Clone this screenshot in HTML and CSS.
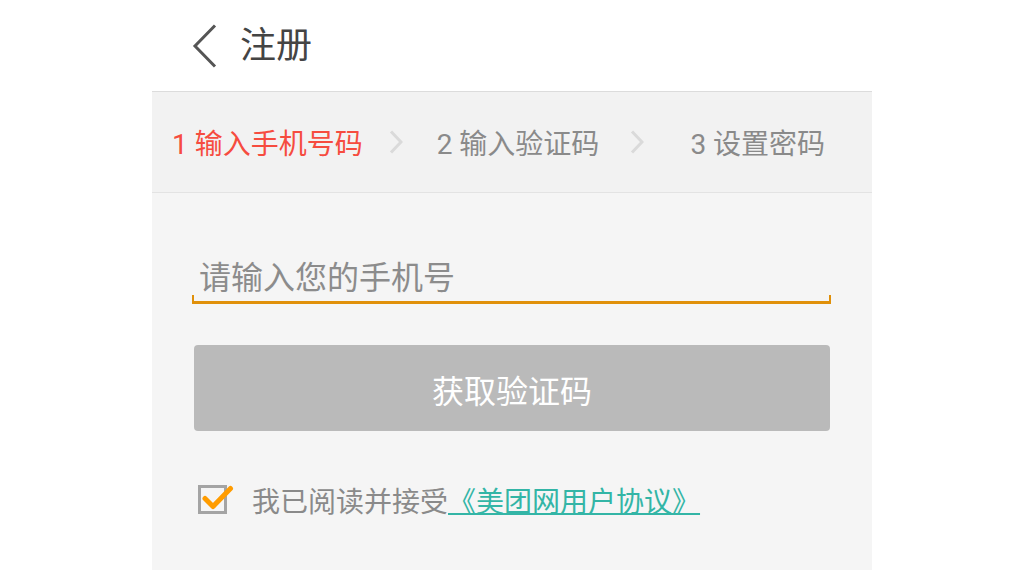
FILE: index.html
```html
<!DOCTYPE html>
<html lang="zh-CN">
<head>
<meta charset="utf-8">
<title>注册</title>
<link rel="stylesheet" href="styles.css">
</head>
<body>
<div class="page">
  <header class="header">
    <svg class="back" width="26" height="44" viewBox="0 0 26 44" aria-hidden="true">
      <path d="M23 1.5 L3 22 L23 42.5" fill="none" stroke="#555" stroke-width="3"/>
    </svg>
    <h1 class="title">注册</h1>
  </header>
  <nav class="steps">
    <span class="step step-active">1 输入手机号码</span>
    <svg class="step-arrow arrow-1" width="14" height="24" viewBox="0 0 14 24" aria-hidden="true">
      <path d="M2 1.5 L12 12 L2 22.5" fill="none" stroke="#dadada" stroke-width="3"/>
    </svg>
    <span class="step">2 输入验证码</span>
    <svg class="step-arrow arrow-2" width="14" height="24" viewBox="0 0 14 24" aria-hidden="true">
      <path d="M2 1.5 L12 12 L2 22.5" fill="none" stroke="#dadada" stroke-width="3"/>
    </svg>
    <span class="step">3 设置密码</span>
  </nav>
  <main class="content">
    <div class="field">
      <span class="placeholder">请输入您的手机号</span>
    </div>
    <div class="btn">获取验证码</div>
    <div class="agree">
      <svg class="check" width="36" height="30" viewBox="0 0 36 30" aria-hidden="true">
        <rect x="1.5" y="1.5" width="26" height="26" fill="none" stroke="#a4a4a4" stroke-width="3"/>
        <path d="M7 13.5 L15 21.5 L32.5 3.5" fill="none" stroke="#ff9c00" stroke-width="5" stroke-linecap="round" stroke-linejoin="round"/>
      </svg>
      <span class="agree-text">我已阅读并接受<a class="agree-link" href="#">《美团网用户协议》</a></span>
    </div>
  </main>
</div>
</body>
</html>
```
FILE: styles.css
```css
html, body {
  margin: 0;
  padding: 0;
  background: #ffffff;
}

body {
  font-family: Roboto, "Noto Sans CJK SC", "Noto Sans", sans-serif;
}

.page {
  width: 720px;
  margin-left: 152px;
  min-height: 570px;
  display: flex;
  flex-direction: column;
}

.header {
  height: 91px;
  display: flex;
  align-items: center;
  padding-left: 40px;
  background: #ffffff;
}

.back {
  display: block;
  flex: none;
}

.title {
  margin: 0 0 0 22px;
  font-size: 36px;
  font-weight: normal;
  color: #444444;
  line-height: 40px;
}

.steps {
  height: 100px;
  display: flex;
  align-items: center;
  padding-left: 20px;
  background: #f2f2f2;
  border-top: 1px solid #dcdcdc;
  border-bottom: 1px solid #e3e3e3;
}

.step {
  font-size: 28px;
  color: #8a8a8a;
  line-height: 36px;
  padding-top: 6px;
  white-space: nowrap;
}

.step-active {
  color: #f64c3f;
}

.step-arrow {
  display: block;
  flex: none;
}

.arrow-1 {
  margin: 0 34px 0 26px;
}

.arrow-2 {
  margin: 0 46px 0 31px;
}

.content {
  flex: 1;
  background: #f5f5f5;
  padding-top: 65px;
}

.field {
  position: relative;
  margin: 0 41px 0 40px;
  padding: 0 0 3px 7px;
  border-bottom: 3px solid #e0900a;
}

.field::before,
.field::after {
  content: "";
  position: absolute;
  bottom: -3px;
  width: 2px;
  height: 9px;
  background: #e0900a;
}

.field::before {
  left: 0;
}

.field::after {
  right: 0;
}

.placeholder {
  display: block;
  font-size: 32px;
  line-height: 40px;
  color: #8c8c8c;
}

.btn {
  margin: 41px 42px 0 42px;
  height: 86px;
  padding-top: 2px;
  box-sizing: border-box;
  border-radius: 4px;
  background: #bababa;
  color: #ffffff;
  font-size: 32px;
  display: flex;
  align-items: center;
  justify-content: center;
}

.agree {
  margin: 54px 0 0 46px;
  display: flex;
  align-items: flex-start;
}

.check {
  display: block;
  flex: none;
  overflow: visible;
}

.agree-text {
  margin: 2px 0 0 18px;
  font-size: 28px;
  line-height: 32px;
  color: #8a8a8a;
}

.agree-link {
  color: #33b5a6;
  text-decoration: underline;
  text-decoration-thickness: 2px;
}
```
